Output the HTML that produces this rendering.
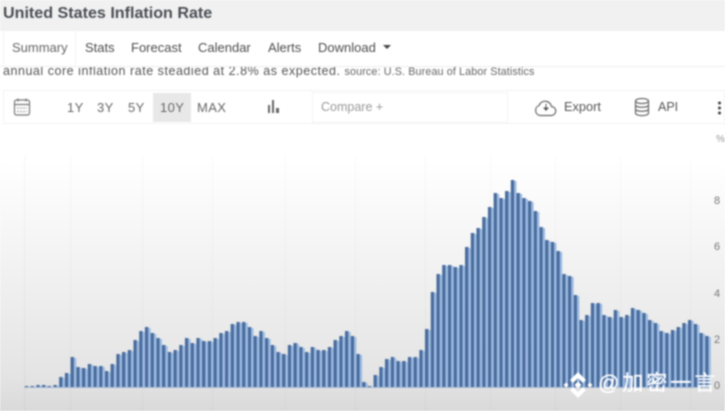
<!DOCTYPE html>
<html><head><meta charset="utf-8">
<style>
html,body{margin:0;padding:0}
body{width:725px;height:411px;overflow:hidden;background:#fff;position:relative;font-family:"Liberation Sans","Noto Sans CJK SC",sans-serif}
#w{position:absolute;left:0;top:0;width:725px;height:411px;overflow:hidden;filter:blur(.7px)}
.t{position:absolute;white-space:nowrap;line-height:1}
.n{top:41px;font-size:13px;color:#4d4d4d}
.r{top:101px;font-size:13px;color:#666;letter-spacing:.4px}
.y{left:714px;font-size:11px;color:#777}
</style></head><body>
<div id="w">
<div style="position:absolute;left:0;top:125px;width:725px;height:286px;background:linear-gradient(#fff 0,#fff 35px,#f3f3f3 130px,#e4e4e4 250px,#d9d9d9 286px)"></div>
<div style="position:absolute;left:0;top:0;width:725px;height:31px;background:#f1f1f1"></div>
<div class="t" style="left:3px;top:5px;font-size:16.100px;font-weight:bold;color:#4a4f55">United States Inflation Rate</div>
<div style="position:absolute;left:3px;top:32px;width:71px;height:33px;border-right:1px solid #f0f0f0;border-left:1px solid #f0f0f0"></div>
<div style="position:absolute;left:0;top:66px;width:725px;height:1px;background:#eee"></div>
<div class="t n" style="left:12px;color:#666">Summary</div>
<div class="t n" style="left:85px">Stats</div>
<div class="t n" style="left:131px">Forecast</div>
<div class="t n" style="left:198px">Calendar</div>
<div class="t n" style="left:268px">Alerts</div>
<div class="t n" style="left:318px">Download</div>
<div style="position:absolute;left:383px;top:45px;width:0;height:0;border-left:4px solid transparent;border-right:4px solid transparent;border-top:4px solid #444"></div>
<div style="position:absolute;left:0;top:67px;width:725px;height:11px;overflow:hidden;background:#fff">
<div class="t" style="left:3px;top:-2px;font-size:12.500px;color:#555;letter-spacing:.53px">annual core inflation rate steadied at 2.8% as expected. <span style="font-size:10.800px;color:#666;letter-spacing:.1px">source: U.S. Bureau of Labor Statistics</span></div>
</div>
<div style="position:absolute;left:3px;top:90px;width:722px;height:34px;border:1px solid #f3f3f3;box-sizing:border-box"></div>
<svg style="position:absolute;left:0;top:90px" width="725" height="36" fill="none">
<g stroke="#777" stroke-width="1.200">
<rect x="14.500" y="10" width="15" height="15" rx="2"/>
<path d="M15 14.500h14M18 8.500v3M26 8.500v3"/>
<path d="M17 18h10M17 21.500h10" stroke="#aaa" stroke-dasharray="2 1"/>
</g>
<path d="M268 23V15h2v8zM272 23V10h2v13zM276 23v-5h3v5z" fill="#666"/>
<g stroke="#666" stroke-width="1.200">
<path d="M540 25.500h11a4.500 4.500 0 0 0 .5-9 6.500 6.500 0 0 0-12.500-1 5.200 5.200 0 0 0 1 10z"/>
<ellipse cx="642" cy="11" rx="6.500" ry="2.500"/>
<path d="M635.500 11v12c0 3.500 13 3.500 13 0V11M635.500 15c0 3 13 3 13 0M635.500 19c0 3 13 3 13 0"/>
</g>
<path d="M545.500 21v-3.500h-2.500l3-3.500 3 3.500h-2.500V21z" fill="#555" transform="rotate(180 546 17.500)"/>
<circle cx="719.500" cy="13" r="1.500" fill="#444"/><circle cx="719.500" cy="18" r="1.500" fill="#444"/><circle cx="719.500" cy="23" r="1.500" fill="#444"/>
</svg>
<div style="position:absolute;left:153px;top:93px;width:38px;height:29px;background:#e8e8e8"></div>
<div class="t r" style="left:67px">1Y</div>
<div class="t r" style="left:97px">3Y</div>
<div class="t r" style="left:128px">5Y</div>
<div class="t r" style="left:160px">10Y</div>
<div class="t r" style="left:197px">MAX</div>
<div style="position:absolute;left:312px;top:92px;width:196px;height:31px;border:1px solid #f5f5f5;box-sizing:border-box"></div>
<div class="t" style="left:321px;top:101px;font-size:12.500px;color:#999">Compare +</div>
<div class="t" style="left:564px;top:101px;font-size:12.800px;color:#555">Export</div>
<div class="t" style="left:658px;top:101px;font-size:12.500px;color:#555">API</div>
<svg style="position:absolute;left:0;top:125px" width="725" height="286">
<g fill="#000" opacity=".018">
<rect x="24" y="30" width="1.500" height="256" opacity="2"/><rect x="70" y="30" width="1" height="256"/><rect x="142" y="30" width="1" height="256"/><rect x="212" y="30" width="1" height="256"/><rect x="285" y="30" width="1" height="256"/><rect x="355" y="30" width="1" height="256"/><rect x="425" y="30" width="1" height="256"/><rect x="490" y="30" width="1" height="256"/><rect x="555" y="30" width="1" height="256"/><rect x="620" y="30" width="1" height="256"/><rect x="690" y="30" width="1" height="256"/>
</g>
</svg>
<svg style="position:absolute;left:0;top:0" width="725" height="411">
<defs>
<pattern id="s" patternUnits="userSpaceOnUse" x="24.800" y="0" width="5.717" height="411"><rect width="5.717" height="411" fill="#9dbce4"/><rect width="3.300" height="411" fill="#4a6c9c"/></pattern>
<path id="b" d="M24.800 387V386h3.800V387h1.917V386h3.800V387h1.917V385h3.800V387h1.917V385h3.800V387h1.917V386h3.800V387h1.917V385h3.800V387h1.917V377h3.800V387h1.917V373h3.800V387h1.917V357h3.800V387h1.917V367h3.800V387h1.917V368h3.800V387h1.917V364h3.800V387h1.917V366h3.800V387h1.917V366h3.800V387h1.917V371h3.800V387h1.917V364h3.800V387h1.917V354h3.800V387h1.917V352h3.800V387h1.917V350h3.800V387h1.917V340h3.800V387h1.917V331h3.800V387h1.917V327h3.800V387h1.917V333h3.800V387h1.917V338h3.800V387h1.917V345h3.800V387h1.917V352h3.800V387h1.917V350h3.800V387h1.917V345h3.800V387h1.917V338h3.800V387h1.917V343h3.800V387h1.917V338h3.800V387h1.917V341h3.800V387h1.917V341h3.800V387h1.917V338h3.800V387h1.917V333h3.800V387h1.917V331h3.800V387h1.917V324h3.800V387h1.917V322h3.800V387h1.917V322h3.800V387h1.917V327h3.800V387h1.917V336h3.800V387h1.917V331h3.800V387h1.917V338h3.800V387h1.917V345h3.800V387h1.917V352h3.800V387h1.917V354h3.800V387h1.917V345h3.800V387h1.917V343h3.800V387h1.917V347h3.800V387h1.917V352h3.800V387h1.917V347h3.800V387h1.917V350h3.800V387h1.917V350h3.800V387h1.917V347h3.800V387h1.917V340h3.800V387h1.917V336h3.800V387h1.917V331h3.800V387h1.917V336h3.800V387h1.917V354h3.800V387h1.917V382h3.800V387h1.917V386h3.800V387h1.917V375h3.800V387h1.917V367h3.800V387h1.917V359h3.800V387h1.917V357h3.800V387h1.917V361h3.800V387h1.917V361h3.800V387h1.917V357h3.800V387h1.917V357h3.800V387h1.917V350h3.800V387h1.917V329h3.800V387h1.917V292h3.800V387h1.917V274h3.800V387h1.917V265h3.800V387h1.917V265h3.800V387h1.917V267h3.800V387h1.917V265h3.800V387h1.917V247h3.800V387h1.917V233h3.800V387h1.917V228h3.800V387h1.917V217h3.800V387h1.917V207h3.800V387h1.917V193h3.800V387h1.917V198h3.800V387h1.917V191h3.800V387h1.917V180h3.800V387h1.917V193h3.800V387h1.917V198h3.800V387h1.917V201h3.800V387h1.917V211h3.800V387h1.917V227h3.800V387h1.917V240h3.800V387h1.917V242h3.800V387h1.917V251h3.800V387h1.917V274h3.800V387h1.917V276h3.800V387h1.917V295h3.800V387h1.917V320h3.800V387h1.917V315h3.800V387h1.917V303h3.800V387h1.917V303h3.800V387h1.917V315h3.800V387h1.917V317h3.800V387h1.917V310h3.800V387h1.917V317h3.800V387h1.917V315h3.800V387h1.917V308h3.800V387h1.917V310h3.800V387h1.917V313h3.800V387h1.917V320h3.800V387h1.917V323h3.800V387h1.917V331h3.800V387h1.917V333h3.800V387h1.917V330h3.800V387h1.917V327h3.800V387h1.917V323h3.800V387h1.917V320h3.800V387h1.917V324h3.800V387h1.917V333h3.800V387h1.917V336h3.800V387z"/>
</defs>
<use href="#b" fill="#9dbce4" transform="translate(1.917 1)"/>
<use href="#b" fill="url(#s)"/>
<rect x="24" y="387" width="685" height="1" fill="#a9bcd6"/>
<g fill="#fff">
<path d="M578 372l8 8-3 3-5-5-5 5-3-3zM578 398l8-8-3-3-5 5-5-5-3 3z"/>
<path d="M578 381.500l3.500 3.500-3.500 3.500-3.500-3.500zM566 382.500l2.500 2.500-2.500 2.500-2.500-2.500zM590 382.500l2.500 2.500-2.500 2.500-2.500-2.500z"/>
</g>
</svg>
<div class="t y" style="top:135px;color:#999;left:716px;font-size:10px">%</div>
<div class="t y" style="top:196px">8</div>
<div class="t y" style="top:242px">6</div>
<div class="t y" style="top:289px">4</div>
<div class="t y" style="top:335px">2</div>
<div class="t y" style="top:381px">0</div>
<div class="t" style="left:598px;top:373px;font-size:21px;letter-spacing:3px;color:#fff;-webkit-text-stroke:.3px #fff">@加密一言</div>
</div>
</body></html>
